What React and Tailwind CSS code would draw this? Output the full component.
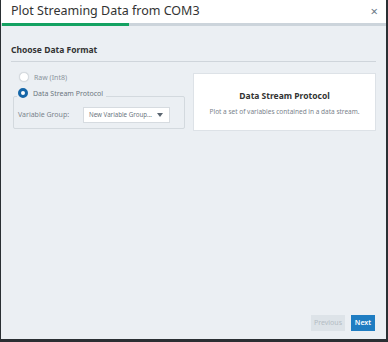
export default function App() {
  return (
    <div className="w-[388px] h-[342px] bg-[#2a2f33] pl-px pr-[2px] pb-[3px]" style={{ fontFamily: '"Noto Sans", "Open Sans", sans-serif' }}>
      <div className="h-full flex flex-col bg-[#ebeff3]">
        <div className="h-[23px] bg-white flex items-center justify-between pl-[10px] pr-[8px]">
          <span className="text-[12.5px] text-[#333] leading-none">Plot Streaming Data from COM3</span>
          <span className="text-[13px] text-[#6b7a88] leading-none">×</span>
        </div>
        <div className="h-[3px] bg-[#ccd4db] flex">
          <div className="w-[127px] ml-px bg-[#14a262]" />
        </div>
        <div className="flex-1 flex flex-col px-[10px]">
          <div className="pt-[19px] pb-[6px] text-[8.5px] font-bold text-[#333] leading-[10px]">Choose Data Format</div>
          <div className="h-px bg-[#cfd5db]" />
          <div className="flex gap-[8px] mt-[11px]">
            <div className="w-[176px] flex flex-col pl-[8px]">
              <label className="flex items-center gap-[5px] h-[10px] mt-[-1px]">
                <span className="w-[10px] h-[10px] rounded-full bg-white border border-[#d6dce1] shadow-[0_0_1px_rgba(0,0,0,0.15)]" />
                <span className="text-[7px] text-[#8a939c] leading-none">Raw (Int8)</span>
              </label>
              <div className="relative mt-[14px] ml-[-6px] border border-[#d3d9de] rounded-[2px] h-[33px] w-[172px]">
                <label className="absolute left-[3px] top-[-9px] flex items-center gap-[5px] bg-[#ebeff3] pl-[1px] pr-[3px] h-[10px]">
                  <span className="w-[10px] h-[10px] rounded-full bg-white border-[3px] border-[#1566a8]" />
                  <span className="text-[7px] text-[#6c7680] leading-none">Data Stream Protocol</span>
                </label>
                <div className="flex items-center mt-[10px] pl-[4px]">
                  <span className="w-[65px] text-[7px] text-[#7a838c] whitespace-nowrap">Variable Group:</span>
                  <div className="w-[87px] h-[16px] bg-white border border-[#d6dbe0] flex items-center justify-between pl-[5px] pr-[6px]">
                    <span className="text-[6.2px] text-[#6c7680] whitespace-nowrap">New Variable Group...</span>
                    <svg width="6" height="4" viewBox="0 0 6 4"><path d="M0 0h6L3 4z" fill="#5a6570" /></svg>
                  </div>
                </div>
              </div>
            </div>
            <div className="w-[185px] h-[58px] bg-white border border-[#dde2e7] flex flex-col items-center pt-[17px]">
              <span className="text-[8.5px] font-bold text-[#333] leading-[10px]">Data Stream Protocol</span>
              <span className="text-[6.5px] text-[#7a838c] mt-[7px] leading-[8px]">Plot a set of variables contained in a data stream.</span>
            </div>
          </div>
          <div className="flex-1" />
          <div className="flex justify-end gap-[6px] pb-[8px] pr-[1px]">
            <div className="w-[34px] h-[16px] bg-[#dde3e8] text-[#b4bcc3] text-[7px] flex items-center justify-center">Previous</div>
            <div className="w-[24px] h-[16px] bg-[#1f7dc2] text-white text-[7px] font-semibold flex items-center justify-center">Next</div>
          </div>
        </div>
      </div>
    </div>
  );
}
